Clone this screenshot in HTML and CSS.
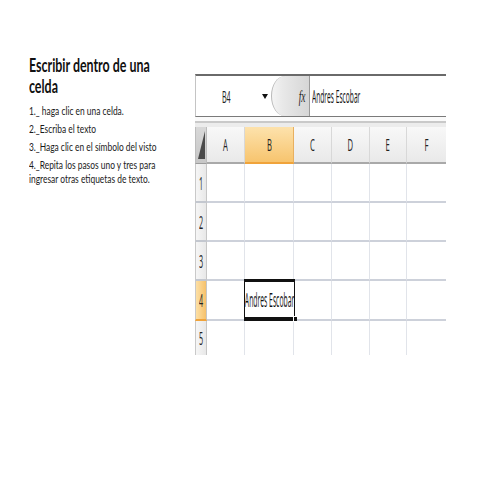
FILE: index.html
```html
<!DOCTYPE html>
<html lang="es">
<head>
<meta charset="utf-8">
<title>Escribir dentro de una celda</title>
<link rel="stylesheet" href="styles.css">
</head>
<body>
<div class="page">
  <div class="notes">
    <h1 class="title">Escribir dentro de una celda</h1>
    <ol class="steps">
      <li>1._ haga clic en una celda.</li>
      <li>2._Escriba el texto</li>
      <li>3._Haga clic en el símbolo del visto</li>
      <li>4._Repita los pasos uno y tres para ingresar otras etiquetas de texto.</li>
    </ol>
  </div>
  <div class="sheet">
    <div class="fbar">
      <div class="namebox"><span class="nx nm">B4</span><span class="arrow"></span></div>
      <div class="fbtn"><span class="nx fx">fx</span></div>
      <div class="fcontent"><span class="nx ftext">Andres Escobar</span></div>
    </div>
    <div class="gap"></div>
    <div class="grid">
      <div class="corner"><span class="tri"></span></div>
      <div class="ch"><span class="nx">A</span></div>
      <div class="ch sel"><span class="nx">B</span></div>
      <div class="ch"><span class="nx">C</span></div>
      <div class="ch"><span class="nx">D</span></div>
      <div class="ch"><span class="nx">E</span></div>
      <div class="ch last"><span class="nx">F</span></div>

      <div class="rh"><span class="nx">1</span></div>
      <div class="c"></div><div class="c"></div><div class="c"></div><div class="c"></div><div class="c"></div><div class="c last"></div>

      <div class="rh"><span class="nx">2</span></div>
      <div class="c"></div><div class="c"></div><div class="c"></div><div class="c"></div><div class="c"></div><div class="c last"></div>

      <div class="rh"><span class="nx">3</span></div>
      <div class="c"></div><div class="c"></div><div class="c"></div><div class="c"></div><div class="c"></div><div class="c last"></div>

      <div class="rh sel"><span class="nx">4</span></div>
      <div class="c"></div>
      <div class="c active"><span class="nx celltext">Andres Escobar</span><span class="handle"></span></div>
      <div class="c"></div><div class="c"></div><div class="c"></div><div class="c last"></div>

      <div class="rh end"><span class="nx">5</span></div>
      <div class="c end"></div><div class="c end"></div><div class="c end"></div><div class="c end"></div><div class="c end"></div><div class="c end last"></div>
    </div>
  </div>
</div>
</body>
</html>
```

FILE: styles.css
```css
* { box-sizing: border-box; }
html, body { margin: 0; padding: 0; background: #fff; }
body { width: 480px; height: 480px; overflow: hidden; font-family: Lato, "Open Sans", "Liberation Sans", sans-serif; color: #111; }

.page { display: flex; }

.notes { width: 195px; padding: 55px 0 0 29px; }
.title { margin: 0 0 8px; font-size: 18px; line-height: 20.5px; font-weight: 700; width: 184px; color: #111; transform: scaleX(0.69); transform-origin: left top; }
.steps { list-style: none; margin: 0; padding: 0; font-size: 12px; line-height: 14px; color: #1a1a1a; width: 196px; transform: scaleX(0.7); transform-origin: left top; }
.steps li { margin-bottom: 4px; }

.sheet { width: 251px; margin-top: 74px; }

.nx { display: inline-block; font-family: "Open Sans", "Liberation Sans", sans-serif; transform: scaleX(0.45); color: #222; line-height: 1; }

.fbar { display: flex; height: 43px; border-top: 2px solid #6a6a6a; border-left: 1px solid #c4c4c4; border-bottom: 1px solid #7a7a7a; background: #fff; }
.namebox { width: 75px; position: relative; display: flex; align-items: center; justify-content: center; padding-right: 14px; }
.nm { font-size: 17px; transform: scaleX(0.42); }
.arrow { position: absolute; left: 66px; top: 18px; width: 0; height: 0; border-left: 3px solid transparent; border-right: 3px solid transparent; border-top: 5px solid #111; }
.fbtn { width: 39px; border-radius: 14px 0 0 14px / 50% 0 0 50%; background: linear-gradient(90deg, #f4f4f4 0%, #e8e8e8 30%, #d6d6d6 100%); border-left: 1px solid #b9b9b9; border-right: 1px solid #9a9a9a; display: flex; align-items: center; justify-content: flex-end; padding-right: 1px; }
.fx { font-size: 17px; font-style: italic; font-family: "Liberation Serif", serif; transform: scaleX(0.55); }
.fcontent { flex: 1; display: flex; align-items: center; padding-left: 2px; }
.ftext { font-size: 18px; transform-origin: left center; white-space: nowrap; transform: scaleX(0.37); color: #111; }

.gap { height: 10px; background: linear-gradient(#fafafa 0, #fafafa 4px, #c9c9c9 4px, #c9c9c9 6px, #ececec 6px); }

.grid { display: grid; grid-template-columns: 12px 38px 49px 38px 38px 37px 39px; grid-template-rows: 37px 39px 39px 39px 40px 34px; }

.corner { background: linear-gradient(#d8d8d8, #c6c6c6); border-left: 1px solid #bdbdbd; border-bottom: 1px solid #9c9c9c; border-right: 1px solid #bcbcbc; position: relative; }
.tri { position: absolute; right: 1px; bottom: 4px; width: 0; height: 0; border-left: 7px solid transparent; border-bottom: 28px solid #4a4a4a; }

.ch { background: linear-gradient(#f8f8f8, #e9e9e9); border-right: 1px solid #d8d8d8; border-bottom: 2px solid #a9a9a9; display: flex; align-items: center; justify-content: center; }
.ch .nx { font-size: 17px; }
.ch.sel { background: linear-gradient(#fde2ac, #f7c46e); border-bottom: 2px solid #f0a33a; border-right-color: #e8b060; }
.ch.last { border-right: none; }

.rh { background: linear-gradient(90deg, #f6f6f6, #e8e8e8); border-left: 1px solid #c9c9c9; border-right: 1px solid #c6c6c6; border-bottom: 2px solid #c3c7cf; display: flex; align-items: center; justify-content: center; }
.rh .nx { font-size: 18px; transform: scaleX(0.4); }
.rh.sel { background: linear-gradient(90deg, #fde0a6, #f6c16a); border-bottom-color: #f0a33a; }
.rh.end { border-bottom: none; }

.c { border-right: 1px solid #e1e4ea; border-bottom: 2px solid #cdd1da; background: #fff; }
.c.last { border-right: none; }
.c.end { border-bottom: none; }

.c.active { position: relative; border: none; border-top: 3px solid #111; border-bottom: 4px solid #111; border-left: 1px solid #111; border-right: 1px solid #111; margin: -2px -1px 0 -1px; display: flex; align-items: center; justify-content: center; overflow: visible; z-index: 2; }
.celltext { font-size: 20px; white-space: nowrap; color: #111; transform: scaleX(0.34); }
.handle { position: absolute; right: -3px; bottom: -5px; width: 4px; height: 6px; background: #111; border: 1px solid #fff; border-right: none; }
```
